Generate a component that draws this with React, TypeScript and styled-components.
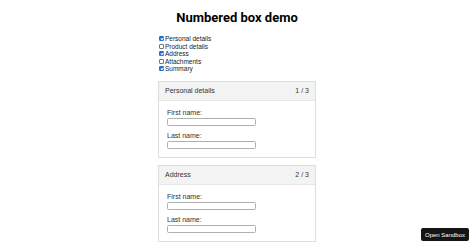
import React, { useState } from 'react';
import styled, { createGlobalStyle } from 'styled-components';

const GlobalStyle = createGlobalStyle`
  html, body {
    margin: 0;
    padding: 0;
    background: #ffffff;
    font-family: "Liberation Sans", Arial, sans-serif;
    color: #111;
  }
`

const sections = [
    { id: 'personal', label: 'Personal details', checked: true },
    { id: 'product', label: 'Product details', checked: false },
    { id: 'address', label: 'Address', checked: true },
    { id: 'attachments', label: 'Attachments', checked: false },
    { id: 'summary', label: 'Summary', checked: true },
]

export default function App() {
    const [checked, setChecked] = useState<Record<string, boolean>>(
        Object.fromEntries(sections.map(s => [s.id, s.checked]))
    );

    const visible = sections.filter(s => checked[s.id]);
    const boxes = visible.filter(s => s.id !== 'summary');

    return (
        <>
            <GlobalStyle/>
            <Page>
                <Title>Numbered box demo</Title>
                <Content>
                    <CheckList>
                        {sections.map(s => (
                            <CheckRow key={s.id}>
                                <CheckBox
                                    type="checkbox"
                                    checked={checked[s.id]}
                                    onChange={() => setChecked({ ...checked, [s.id]: !checked[s.id] })}
                                />
                                {s.label}
                            </CheckRow>
                        ))}
                    </CheckList>
                    {boxes.map((s, i) => (
                        <Box key={s.id}>
                            <BoxHeader>
                                <span>{s.label}</span>
                                <span>{i + 1} / {visible.length}</span>
                            </BoxHeader>
                            <BoxBody>
                                <Field>
                                    <FieldLabel>First name:</FieldLabel>
                                    <Input/>
                                </Field>
                                <Field>
                                    <FieldLabel>Last name:</FieldLabel>
                                    <Input/>
                                </Field>
                            </BoxBody>
                        </Box>
                    ))}
                </Content>
            </Page>
            <SandboxButton>Open Sandbox</SandboxButton>
        </>
    );
}

const Page = styled.main`
  display: flex;
  flex-direction: column;
  align-items: center;
  padding-top: 9px;
`
const Title = styled.h1`
  margin: 0 0 8px;
  font-size: 13px;
  font-weight: 700;
  font-family: Roboto, "Liberation Sans", sans-serif;
  line-height: 18px;
  color: #000;
`
const Content = styled.div`
  width: 158px;
  display: flex;
  flex-direction: column;
  gap: 7px;
`
const CheckList = styled.div`
  display: flex;
  flex-direction: column;
  padding-left: 1px;
  margin-bottom: 1px;
`
const CheckRow = styled.label`
  display: flex;
  align-items: center;
  font-size: 6.5px;
  line-height: 7.5px;
  color: #222;
`
const CheckBox = styled.input`
  appearance: none;
  position: relative;
  width: 5px;
  height: 5px;
  margin: 0 1px 0 0;
  box-sizing: border-box;
  border: 0.6px solid #777;
  border-radius: 1px;
  background: #fff;

  &:checked {
    border-color: #1f6fd6;
    background: #1f6fd6;
  }

  &:checked::after {
    content: "";
    position: absolute;
    left: 1.3px;
    top: 0.2px;
    width: 1.2px;
    height: 2.4px;
    border: solid #fff;
    border-width: 0 0.7px 0.7px 0;
    transform: rotate(45deg);
  }
`
const Box = styled.section`
  border: 1px solid #dddddd;
  background: #fff;
`
const BoxHeader = styled.div`
  display: flex;
  justify-content: space-between;
  align-items: center;
  height: 18px;
  padding: 0 6px 0 6px;
  background: #f3f3f3;
  border-bottom: 1px solid #e6e6e6;
  font-size: 7px;
  color: #333;
`
const BoxBody = styled.div`
  display: flex;
  flex-direction: column;
  gap: 6px;
  padding: 8px 8px 8px;
`
const Field = styled.label`
  display: flex;
  flex-direction: column;
  gap: 1px;
  font-size: 7px;
  color: #333;
`
const FieldLabel = styled.span`
  line-height: 8px;
`
const Input = styled.input`
  width: 89px;
  height: 8px;
  box-sizing: border-box;
  border: 0.8px solid #b0b0b0;
  border-radius: 1.5px;
  padding: 0;
  background: #fff;
`
const SandboxButton = styled.button`
  position: fixed;
  right: 5px;
  bottom: 7px;
  height: 13px;
  padding: 0 4px;
  border: none;
  border-radius: 2px;
  background: #151515;
  color: #fff;
  font-family: "Liberation Sans", Arial, sans-serif;
  font-size: 6px;
`
